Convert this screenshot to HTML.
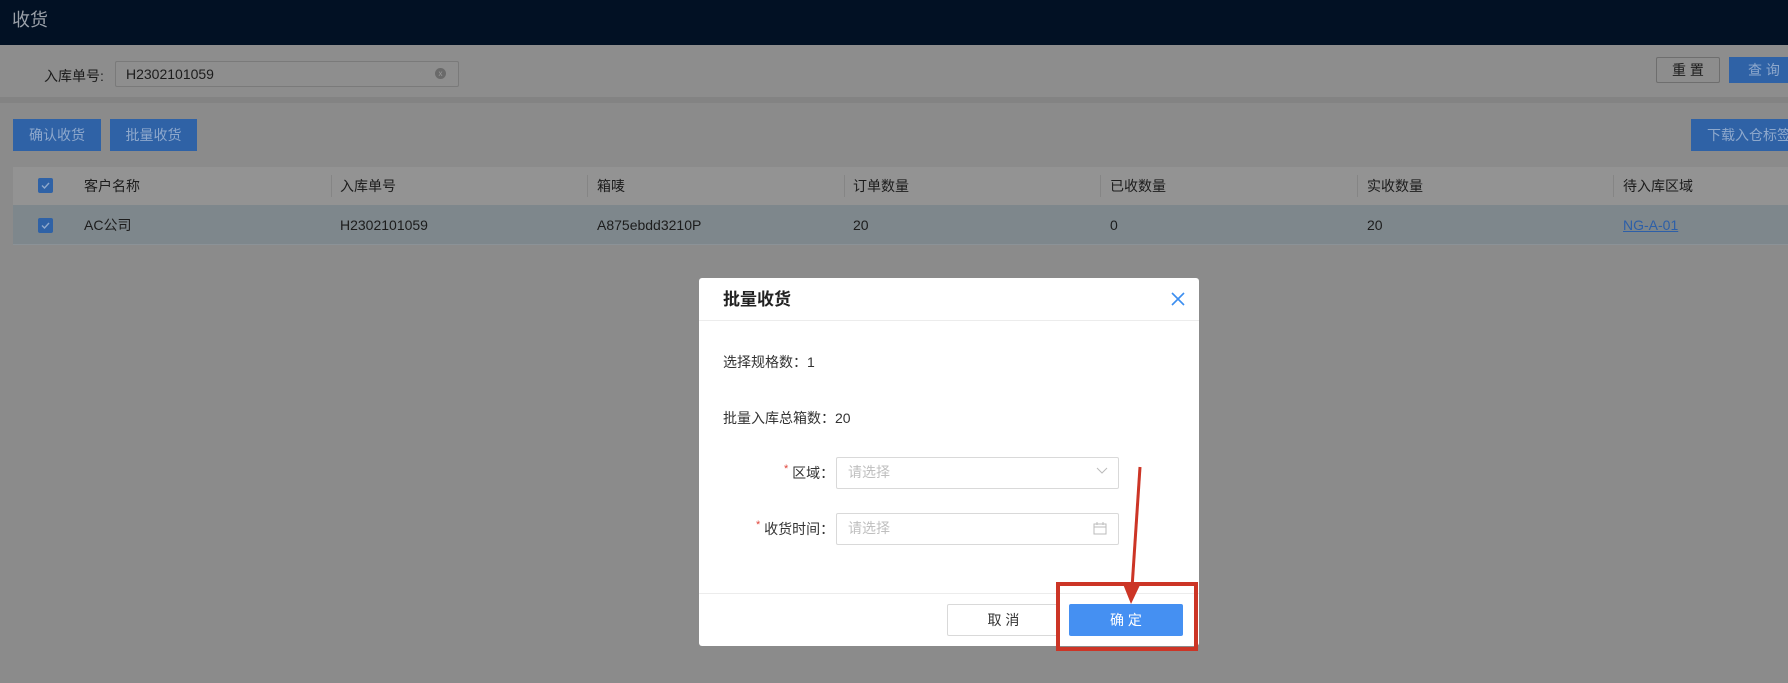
<!DOCTYPE html>
<html><head><meta charset="utf-8"><style>
*{margin:0;padding:0;box-sizing:border-box}
body{width:1788px;height:683px;overflow:hidden;position:relative;background:#8b8b8b;font-family:"Liberation Sans","Noto Sans CJK SC",sans-serif;font-size:14px;color:#1a1a1a}
.a{position:absolute}
.hdr{left:0;top:0;width:1788px;height:45px;background:#021124;color:#9aa0a8;font-size:18px;line-height:40px;padding-left:12px}
.btn{position:absolute;background:#2f62a6;color:#8ea8cc;font-size:14px;text-align:center;line-height:32px}
.th{top:167px;height:38px;line-height:38px;font-size:14px;color:#1c1c1c}
.td{top:205px;height:40px;line-height:40px;font-size:14px;color:#1c1c1c}
.cb{width:15px;height:15px;background:#2f62a6;border-radius:2px}
.sep{width:1px;height:22px;top:175px;background:#858585}
.inp{border:1px solid #d9d9d9;border-radius:2px;background:#fff;color:#bfbfbf;font-size:14px;padding-left:11px;line-height:29px}
</style></head><body>
<div class="a hdr">收货</div>
<div class="a" style="left:0;top:45px;width:1788px;height:52px;background:#8d8d8d"></div>
<div class="a" style="left:44px;top:66px;font-size:14px;color:#1c1c1c">入库单号:</div>
<div class="a" style="left:115px;top:61px;width:344px;height:26px;border:1px solid #7a7a7a;border-radius:2px;background:#8e8e8e;line-height:24px;padding-left:10px;font-size:14px;color:#1c1c1c">H2302101059</div>
<div class="a" style="left:435px;top:68px;width:11px;height:11px;border-radius:50%;background:#6a6a6a;color:#999;font-size:8px;line-height:11px;text-align:center">x</div>
<div class="a" style="left:1656px;top:57px;width:64px;height:26px;border:1px solid #6e6e6e;border-radius:2px;line-height:24px;text-align:center;color:#1c1c1c">重 置</div>
<div class="btn" style="left:1729px;top:57px;width:70px;height:26px;line-height:26px">查 询</div>
<div class="a" style="left:0;top:97px;width:1788px;height:6px;background:#838383"></div>
<div class="btn" style="left:13px;top:119px;width:88px;height:32px">确认收货</div>
<div class="btn" style="left:110px;top:119px;width:87px;height:32px">批量收货</div>
<div class="btn" style="left:1691px;top:119px;width:110px;height:32px;text-align:left;padding-left:16px">下载入仓标签</div>
<div class="a" style="left:13px;top:167px;width:1775px;height:38px;background:#939393"></div>
<div class="a" style="left:13px;top:205px;width:1775px;height:40px;background:#7e878c;border-bottom:1px solid #8b9297"></div>
<svg class="a" style="left:38px;top:178px" width="15" height="15"><rect width="15" height="15" rx="2" fill="#2f62a6"/><path d="M4 7.5L6.5 10L11 5" stroke="#8ea8cc" stroke-width="1.4" fill="none"/></svg>
<svg class="a" style="left:38px;top:218px" width="15" height="15"><rect width="15" height="15" rx="2" fill="#2f62a6"/><path d="M4 7.5L6.5 10L11 5" stroke="#8ea8cc" stroke-width="1.4" fill="none"/></svg>
<div class="a th" style="left:84px">客户名称</div>
<div class="a sep" style="left:331px"></div><div class="a th" style="left:340px">入库单号</div>
<div class="a sep" style="left:587px"></div><div class="a th" style="left:597px">箱唛</div>
<div class="a sep" style="left:844px"></div><div class="a th" style="left:853px">订单数量</div>
<div class="a sep" style="left:1100px"></div><div class="a th" style="left:1110px">已收数量</div>
<div class="a sep" style="left:1357px"></div><div class="a th" style="left:1367px">实收数量</div>
<div class="a sep" style="left:1613px"></div><div class="a th" style="left:1623px">待入库区域</div>
<div class="a td" style="left:84px">AC公司</div>
<div class="a td" style="left:340px">H2302101059</div>
<div class="a td" style="left:597px">A875ebdd3210P</div>
<div class="a td" style="left:853px">20</div>
<div class="a td" style="left:1110px">0</div>
<div class="a td" style="left:1367px">20</div>
<div class="a td" style="left:1623px;color:#2d5fa8;text-decoration:underline">NG-A-01</div>

<div class="a" style="left:699px;top:278px;width:500px;height:368px;background:#fff;border-radius:3px"></div>
<div class="a" style="left:723px;top:288px;font-size:17px;font-weight:bold;color:#222;line-height:24px">批量收货</div>
<svg class="a" style="left:1171px;top:292px" width="14" height="14"><path d="M1 1L13 13M13 1L1 13" stroke="#3c8ef0" stroke-width="1.6"/></svg>
<div class="a" style="left:699px;top:320px;width:500px;height:1px;background:#ececec"></div>
<div class="a" style="left:723px;top:352px;color:#333">选择规格数：1</div>
<div class="a" style="left:723px;top:408px;color:#333">批量入库总箱数：20</div>
<div class="a" style="left:784px;top:463px;color:#333"><span style="color:#e0443a;font-size:11px;vertical-align:top">*</span> 区域：</div>
<div class="a inp" style="left:836px;top:457px;width:283px;height:32px">请选择</div>
<svg class="a" style="left:1096px;top:467px" width="12" height="8"><path d="M1 1L6 6L11 1" stroke="#bbb" fill="none"/></svg>
<div class="a" style="left:756px;top:519px;color:#333"><span style="color:#e0443a;font-size:11px;vertical-align:top">*</span> 收货时间：</div>
<div class="a inp" style="left:836px;top:513px;width:283px;height:32px">请选择</div>
<svg class="a" style="left:1093px;top:522px" width="14" height="13"><rect x="1" y="2" width="12" height="10" fill="none" stroke="#bbb"/><path d="M1 5H13M4 0V3M10 0V3" stroke="#bbb"/></svg>
<div class="a" style="left:699px;top:593px;width:500px;height:1px;background:#ececec"></div>
<div class="a" style="left:947px;top:604px;width:113px;height:32px;border:1px solid #d9d9d9;border-radius:2px;text-align:center;line-height:30px;color:#333">取 消</div>
<div class="a" style="left:1069px;top:604px;width:114px;height:32px;background:#4590f2;border-radius:2px;text-align:center;line-height:32px;color:#fff">确 定</div>
<div class="a" style="left:1056px;top:582px;width:142px;height:69px;border:4px solid #cc3526"></div>
<svg class="a" style="left:1110px;top:460px" width="40" height="150"><path d="M30 7L22 128" stroke="#cc3526" stroke-width="3"/><path d="M13 124L30 125L21 144Z" fill="#cc3526"/></svg>
</body></html>
